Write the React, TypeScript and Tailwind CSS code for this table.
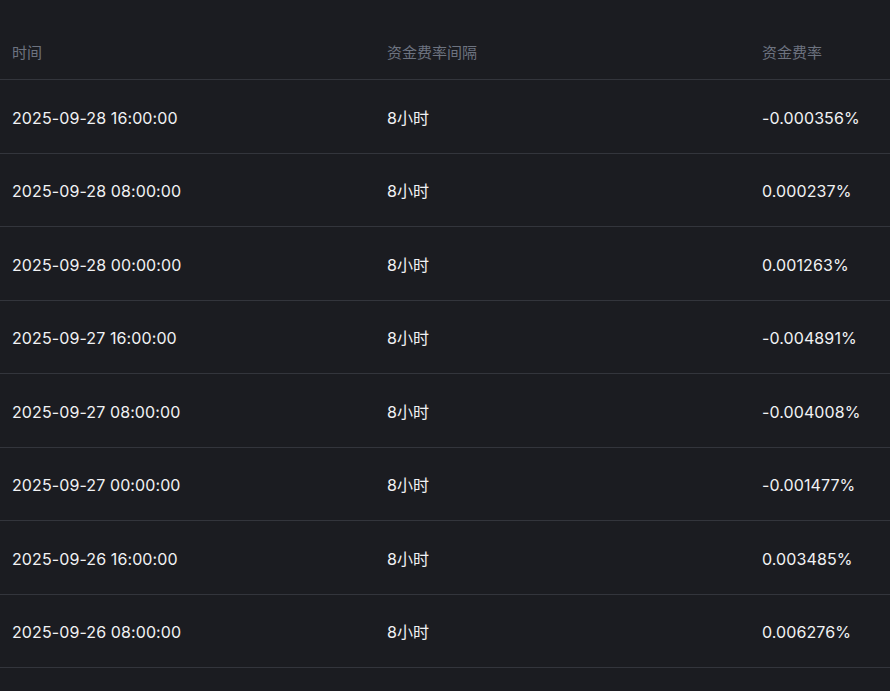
import React from "react";

const rows = [
  { time: "2025-09-28 16:00:00", interval: "8小时", rate: "-0.000356%" },
  { time: "2025-09-28 08:00:00", interval: "8小时", rate: "0.000237%" },
  { time: "2025-09-28 00:00:00", interval: "8小时", rate: "0.001263%" },
  { time: "2025-09-27 16:00:00", interval: "8小时", rate: "-0.004891%" },
  { time: "2025-09-27 08:00:00", interval: "8小时", rate: "-0.004008%" },
  { time: "2025-09-27 00:00:00", interval: "8小时", rate: "-0.001477%" },
  { time: "2025-09-26 16:00:00", interval: "8小时", rate: "0.003485%" },
  { time: "2025-09-26 08:00:00", interval: "8小时", rate: "0.006276%" },
];

export default function App() {
  return (
    <div
      className="min-h-screen w-full bg-[#1b1c21] text-[#f1f2f4] overflow-hidden"
      style={{ fontFamily: 'Inter, "Noto Sans CJK SC", sans-serif' }}
    >
      {/* header */}
      <div className="grid grid-cols-[375px_375px_1fr] h-[80px] items-end pb-[15px] px-3 border-b border-[#33353c] text-[15px] text-[#6d7380]">
        <div>时间</div>
        <div>资金费率间隔</div>
        <div>资金费率</div>
      </div>
      {rows.map((r, idx) => (
        <div
          key={idx}
          className="grid grid-cols-[375px_375px_1fr] h-[73.5px] items-center pt-[3px] px-3 border-b border-[#33353c] text-[16px] tracking-[0.1px]"
        >
          <div>{r.time}</div>
          <div>{r.interval}</div>
          <div>{r.rate}</div>
        </div>
      ))}
    </div>
  );
}
